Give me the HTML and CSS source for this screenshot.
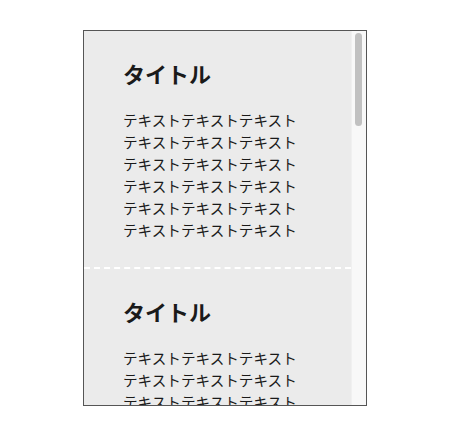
FILE: index.html
```html
<!DOCTYPE html>
<html lang="ja">
<head>
    <meta charset="UTF-8">
    <meta name="viewport" content="width=device-width, initial-scale=1.0">
    <title>スクロールリスト</title>
    <link rel="stylesheet" href="styles.css">
</head>
<body>
    <div class="scroll-box">
        <div class="list">
            <section class="item">
                <h2>タイトル</h2>
                <p>テキストテキストテキスト<br>テキストテキストテキスト<br>テキストテキストテキスト<br>テキストテキストテキスト<br>テキストテキストテキスト<br>テキストテキストテキスト</p>
            </section>
            <section class="item">
                <h2>タイトル</h2>
                <p>テキストテキストテキスト<br>テキストテキストテキスト<br>テキストテキストテキスト<br>テキストテキストテキスト<br>テキストテキストテキスト<br>テキストテキストテキスト</p>
            </section>
            <section class="item">
                <h2>タイトル</h2>
                <p>テキストテキストテキスト<br>テキストテキストテキスト<br>テキストテキストテキスト<br>テキストテキストテキスト<br>テキストテキストテキスト<br>テキストテキストテキスト</p>
            </section>
        </div>
        <!-- スクロールバー -->
        <div class="scrollbar">
            <div class="thumb"></div>
        </div>
    </div>
</body>
</html>
```

FILE: styles.css
```css
body {
    margin: 0;
    padding: 30px 0 0 83px;
    background-color: #fff;
    font-family: "Noto Sans CJK JP", "Noto Sans", sans-serif;
    color: #1a1a1a;
}
.scroll-box {
    display: flex;
    width: 282px;
    height: 374px;
    border: 1px solid #555;
    background-color: #ebebeb;
}
.list {
    flex: 1;
    overflow: hidden;
}
.item {
    padding: 25px 40px 26px 39px;
    border-bottom: 2px dashed #fff;
}
.item h2 {
    margin: 0 0 19px;
    font-size: 22px;
    line-height: 34px;
    font-weight: bold;
}
.item p {
    margin: 0;
    font-size: 14.6px;
    line-height: 22px;
}
.scrollbar {
    width: 14px;
    background-color: #f8f8f8;
    border-left: 1px solid #f0f0f0;
}
.thumb {
    width: 7px;
    height: 93px;
    margin: 2px 0 0 3px;
    border-radius: 4px;
    background-color: #c1c1c1;
}
```
